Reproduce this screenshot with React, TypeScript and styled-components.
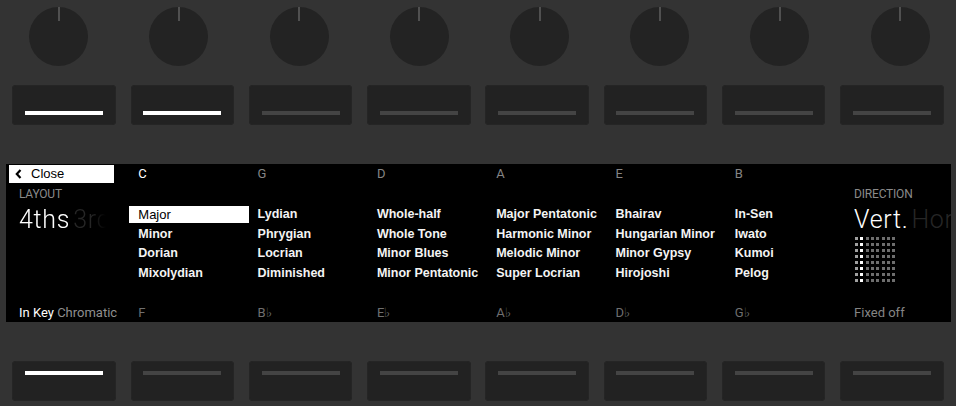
import React from 'react'
import styled, { createGlobalStyle } from 'styled-components'

const GlobalStyle = createGlobalStyle`
  html, body {
    margin: 0;
    padding: 0;
    background: #333333;
  }
  body {
    width: 956px;
    height: 406px;
    overflow: hidden;
    font-family: Roboto, "Liberation Sans", sans-serif;
  }
`

const Surface = styled.div`
  width: 956px;
  height: 406px;
  display: flex;
  flex-direction: column;
`

const KnobRow = styled.div`
  display: flex;
  gap: 61.2px;
  padding: 7px 0 0 29.3px;
`

const Knob = styled.div`
  position: relative;
  width: 59px;
  height: 59px;
  border-radius: 50%;
  background: #232323;

  &::after {
    content: '';
    position: absolute;
    left: 28.5px;
    top: 0;
    width: 2px;
    height: 14px;
    background: #505050;
  }
`

const ButtonRow = styled.div<{ $top: number }>`
  display: flex;
  gap: 14.9px;
  padding-left: 12.3px;
  margin-top: ${({ $top }) => $top}px;
`

const PadButton = styled.div<{ $barAt: 'top' | 'bottom' }>`
  box-sizing: border-box;
  width: 103.4px;
  height: 39.4px;
  border-radius: 4px;
  background: #222222;
  box-shadow: inset 0 0 0 1px #252525;
  display: flex;
  justify-content: center;
  align-items: ${({ $barAt }) => ($barAt === 'top' ? 'flex-start' : 'flex-end')};
  padding: 10px 0;
`

const Bar = styled.div<{ $on?: boolean }>`
  width: 78px;
  height: 4px;
  background: ${({ $on }) => ($on ? '#ffffff' : '#444444')};
`

const Display = styled.div`
  box-sizing: border-box;
  margin: 39.3px 0 0 6px;
  width: 945px;
  height: 158px;
  background: #000;
  padding-left: 4px;
  display: grid;
  grid-template-columns: repeat(8, 119.3px);
  overflow: hidden;
`

const Column = styled.div`
  height: 158px;
  box-sizing: border-box;
  padding: 1px 0 0;
  display: flex;
  flex-direction: column;
  min-width: 0;
`

const CloseButton = styled.div`
  box-sizing: border-box;
  margin-left: -1px;
  width: 105px;
  height: 18px;
  background: #fff;
  color: #000;
  display: flex;
  align-items: center;
  gap: 9px;
  padding-left: 6px;
  font: 13px "Liberation Sans", Arial, sans-serif;
`

const KeyCell = styled.div<{ $on?: boolean; $dim?: boolean }>`
  height: 18px;
  line-height: 18px;
  padding-left: 9px;
  font-size: 13px;
  white-space: nowrap;
  color: ${({ $on, $dim }) => ($on ? '#ffffff' : $dim ? '#6f6f6f' : '#858585')};
`

const BottomCell = styled(KeyCell)`
  margin-top: auto;
`

const Muted = styled.span`
  color: #8f8f8f;
`

const ScaleList = styled.div`
  margin-top: 23px;
  display: flex;
  flex-direction: column;
  gap: 2.6px;
`

const ScaleItem = styled.div<{ $selected?: boolean }>`
  height: 17px;
  line-height: 17px;
  padding-left: 9px;
  white-space: nowrap;
  font-family: "Liberation Sans", Arial, sans-serif;
  font-size: ${({ $selected }) => ($selected ? '13px' : '12.5px')};
  font-weight: ${({ $selected }) => ($selected ? 400 : 700)};
  background: ${({ $selected }) => ($selected ? '#fff' : 'transparent')};
  color: ${({ $selected }) => ($selected ? '#000' : '#f4f4f4')};
`

const Label = styled.div`
  margin-top: 4px;
  height: 14px;
  line-height: 14px;
  padding-left: 9px;
  font-size: 12px;
  color: #8a8a8a;
  letter-spacing: -0.2px;
`

const BigValue = styled.div<{ $fade?: boolean }>`
  margin-top: 5.2px;
  height: 28px;
  line-height: 28px;
  margin-left: 9px;
  width: ${({ $fade }) => ($fade ? '87px' : 'auto')};
  overflow: hidden;
  white-space: nowrap;
  font-size: 25px;
  font-weight: 300;
  letter-spacing: 0.7px;
  display: flex;
  gap: 3px;
  ${({ $fade }) =>
    $fade &&
    `
    -webkit-mask-image: linear-gradient(to right, #000 84%, transparent 100%);
    mask-image: linear-gradient(to right, #000 84%, transparent 100%);
  `}
`

const ValuePart = styled.span<{ $on?: boolean }>`
  color: ${({ $on }) => ($on ? '#ffffff' : '#262626')};
`

const DotGrid = styled.div`
  margin: 3.3px 0 0 10px;
  display: grid;
  grid-template-columns: repeat(8, 3px);
  grid-auto-rows: 3px;
  column-gap: 2.3px;
  row-gap: 2.9px;
`

const Dot = styled.span<{ $level: number }>`
  background: ${({ $level }) => ['#6e6e6e', '#a0a0a0', '#ffffff'][$level]};
`

const scaleColumns = [
  { key: 'C', bottom: 'F', on: true, scales: ['Major', 'Minor', 'Dorian', 'Mixolydian'] },
  { key: 'G', bottom: 'B♭', scales: ['Lydian', 'Phrygian', 'Locrian', 'Diminished'] },
  { key: 'D', bottom: 'E♭', scales: ['Whole-half', 'Whole Tone', 'Minor Blues', 'Minor Pentatonic'] },
  { key: 'A', bottom: 'A♭', scales: ['Major Pentatonic', 'Harmonic Minor', 'Melodic Minor', 'Super Locrian'] },
  { key: 'E', bottom: 'D♭', scales: ['Bhairav', 'Hungarian Minor', 'Minor Gypsy', 'Hirojoshi'] },
  { key: 'B', bottom: 'G♭', scales: ['In-Sen', 'Iwato', 'Kumoi', 'Pelog'] },
]

const topBars = [true, true, false, false, false, false, false, false]
const bottomBars = [true, false, false, false, false, false, false, false]

const ChevronLeft = () => (
  <svg width="7" height="10" viewBox="0 0 7 10">
    <polyline points="5.5,1 1.8,5 5.5,9" fill="none" stroke="#000" strokeWidth="2.2" />
  </svg>
)

const App: React.FC = () => (
  <Surface>
    <GlobalStyle />
    <KnobRow>
      {topBars.map((_, i) => (
        <Knob key={i} />
      ))}
    </KnobRow>

    <ButtonRow $top={19.3}>
      {topBars.map((on, i) => (
        <PadButton key={i} $barAt="bottom">
          <Bar $on={on} />
        </PadButton>
      ))}
    </ButtonRow>

    <Display>
      <Column>
        <CloseButton>
          <ChevronLeft />
          Close
        </CloseButton>
        <Label>LAYOUT</Label>
        <BigValue $fade>
          <ValuePart $on>4ths</ValuePart>
          <ValuePart>3rds</ValuePart>
        </BigValue>
        <BottomCell $on>
          In Key <Muted>Chromatic</Muted>
        </BottomCell>
      </Column>

      {scaleColumns.map((col) => (
        <Column key={col.key}>
          <KeyCell $on={col.on}>{col.key}</KeyCell>
          <ScaleList>
            {col.scales.map((s) => (
              <ScaleItem key={s} $selected={s === 'Major'}>
                {s}
              </ScaleItem>
            ))}
          </ScaleList>
          <BottomCell $dim>{col.bottom}</BottomCell>
        </Column>
      ))}

      <Column>
        <KeyCell />
        <Label>DIRECTION</Label>
        <BigValue>
          <ValuePart $on>Vert.</ValuePart>
          <ValuePart>Horiz.</ValuePart>
        </BigValue>
        <DotGrid>
          {Array.from({ length: 64 }, (_, i) => {
            const c = i % 8
            return <Dot key={i} $level={c === 1 ? 2 : c === 0 ? 1 : 0} />
          })}
        </DotGrid>
        <BottomCell>Fixed off</BottomCell>
      </Column>
    </Display>

    <ButtonRow $top={39.3}>
      {bottomBars.map((on, i) => (
        <PadButton key={i} $barAt="top">
          <Bar $on={on} />
        </PadButton>
      ))}
    </ButtonRow>
  </Surface>
)

export default App
